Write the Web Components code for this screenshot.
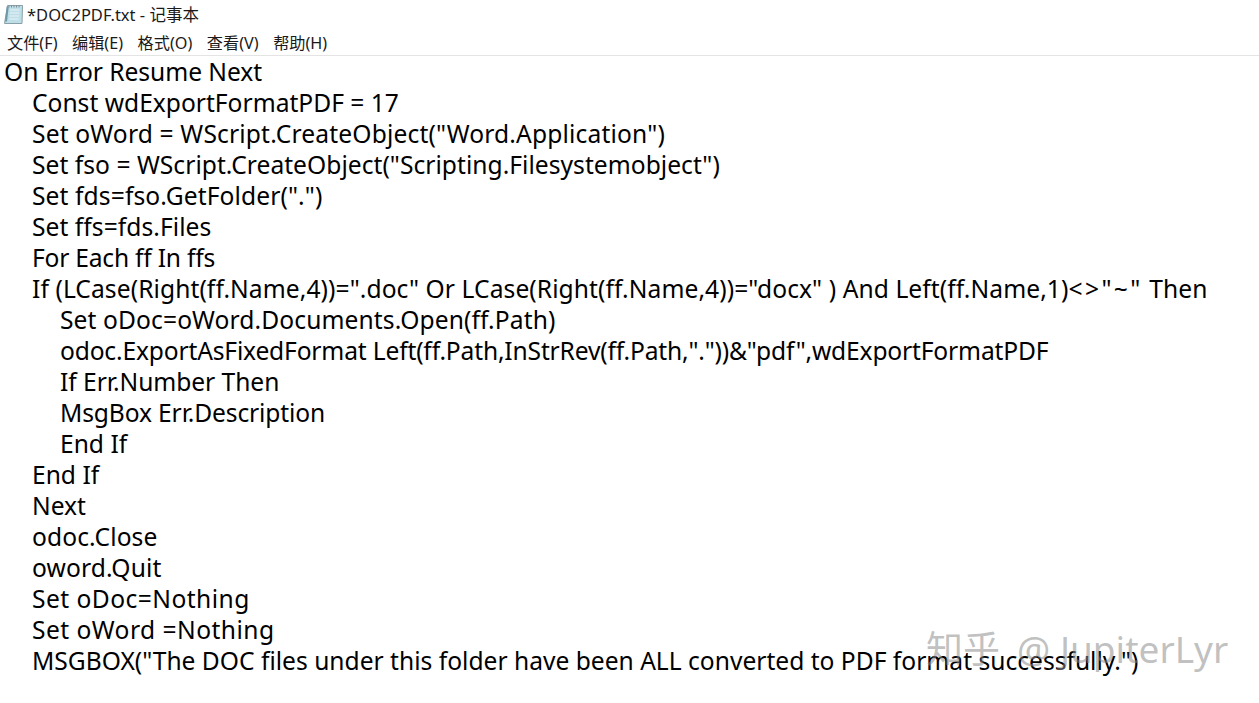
<!DOCTYPE html>
<html>
<head>
<meta charset="utf-8">
<style>
  html, body { margin: 0; height: 100%; background: #fff; overflow: hidden; }
  .wide { letter-spacing: 2.4px; }
</style>
</head>
<body>
<notepad-window title-text="*DOC2PDF.txt - 记事本">
  <code-line spacing="-0.05">On Error Resume Next</code-line>
  <code-line level="1">Const wdExportFormatPDF = 17</code-line>
  <code-line level="1" spacing="0.16">Set oWord = WScript.CreateObject("Word.Application")</code-line>
  <code-line level="1" spacing="0.03">Set fso = WScript.CreateObject("Scripting.Filesystemobject")</code-line>
  <code-line level="1" spacing="0.1">Set fds=fso.GetFolder(".")</code-line>
  <code-line level="1" spacing="0.05">Set ffs=fds.Files</code-line>
  <code-line level="1" spacing="-0.22">For Each ff In ffs</code-line>
  <code-line level="1" spacing="0.08">If (LCase(Right(ff.Name,4))=".doc" Or LCase(Right(ff.Name,4))="docx" ) And Left(ff.Name,1)<span class="wide">&lt;&gt;"~"</span> Then</code-line>
  <code-line level="2" spacing="0.1">Set oDoc=oWord.Documents.Open(ff.Path)</code-line>
  <code-line level="2" spacing="-0.17">odoc.ExportAsFixedFormat Left(ff.Path,InStrRev(ff.Path,"."))&amp;"pdf",wdExportFormatPDF</code-line>
  <code-line level="2" spacing="-0.05">If Err.Number Then</code-line>
  <code-line level="2" spacing="-0.13">MsgBox Err.Description</code-line>
  <code-line level="2">End If</code-line>
  <code-line level="1">End If</code-line>
  <code-line level="1">Next</code-line>
  <code-line level="1" spacing="0.1">odoc.Close</code-line>
  <code-line level="1" spacing="0.1">oword.Quit</code-line>
  <code-line level="1" spacing="0.45">Set oDoc=Nothing</code-line>
  <code-line level="1" spacing="0.45">Set oWord =Nothing</code-line>
  <code-line level="1">MSGBOX("The DOC files under this folder have been ALL converted to PDF format successfully.")</code-line>
</notepad-window>
<script>
class CodeLine extends HTMLElement {
  constructor() {
    super();
    this.attachShadow({ mode: 'open' });
    this.shadowRoot.innerHTML = `
      <style>
        :host {
          display: block;
          height: 31px;
          line-height: 31px;
          white-space: nowrap;
          padding-left: calc(var(--level, 0) * 28px);
          letter-spacing: calc(var(--spacing, 0) * 1px);
        }
      </style>
      <slot></slot>
    `;
  }

  connectedCallback() {
    this.style.setProperty('--level', this.getAttribute('level') || 0);
    this.style.setProperty('--spacing', this.getAttribute('spacing') || 0);
  }
}

class NotepadWindow extends HTMLElement {
  constructor() {
    super();
    this.attachShadow({ mode: 'open' });
    const menus = ['文件(F)', '编辑(E)', '格式(O)', '查看(V)', '帮助(H)'];
    this.shadowRoot.innerHTML = `
      <style>
        :host {
          display: block;
          position: relative;
          height: 703px;
          font-family: "Noto Sans", "Noto Sans CJK SC", sans-serif;
          color: #000;
          overflow: hidden;
        }
        .title {
          display: flex;
          align-items: center;
          gap: 3px;
          height: 29px;
          padding: 0 0 1px 3px;
          box-sizing: border-box;
          font-size: 16.5px;
          color: #1a1a1a;
        }
        .menu {
          display: flex;
          gap: 14.5px;
          align-items: center;
          height: 26px;
          padding-left: 7px;
          font-size: 16.2px;
          color: #1a1a1a;
          border-bottom: 1px solid #e4e4e4;
        }
        .text {
          padding: 0 0 0 4px;
          font-size: 24.6px;
        }
        .mark {
          position: absolute;
          left: 926px;
          top: 624px;
          display: flex;
          align-items: center;
          gap: 17px;
          font-size: 37px;
          line-height: 50px;
          color: rgba(140, 140, 140, 0.55);
          white-space: nowrap;
        }
      </style>
      <div class="title">
        <svg width="21" height="21" viewBox="0 0 21 21">
          <path d="M4.5 1.5h15l-.5 18H1.500z" fill="#bfdfe8" stroke="#8aa0a8"/>
          <path d="M3 17.5l1.8-15" stroke="#6f98a8" stroke-width="2" fill="none"/>
          <path d="M7 6h9.5M6.8 9h9.5M6.5 12h9.5M6.2 15h9.5" stroke="#e6f3f6"/>
          <path d="M6 1.5v2M8.5 1.5v2M11 1.5v2M13.5 1.5v2M16 1.5v2" stroke="#7d8f96"/>
        </svg>
        <span id="title"></span>
      </div>
      <div class="menu">${menus.map(m => `<span>${m}</span>`).join('')}</div>
      <div class="text"><slot></slot></div>
      <div class="mark"><span>知乎</span><span>@ JupiterLyr</span></div>
    `;
  }

  connectedCallback() {
    this.shadowRoot.getElementById('title').textContent = this.getAttribute('title-text');
  }
}

customElements.define('code-line', CodeLine);
customElements.define('notepad-window', NotepadWindow);
</script>
</body>
</html>
